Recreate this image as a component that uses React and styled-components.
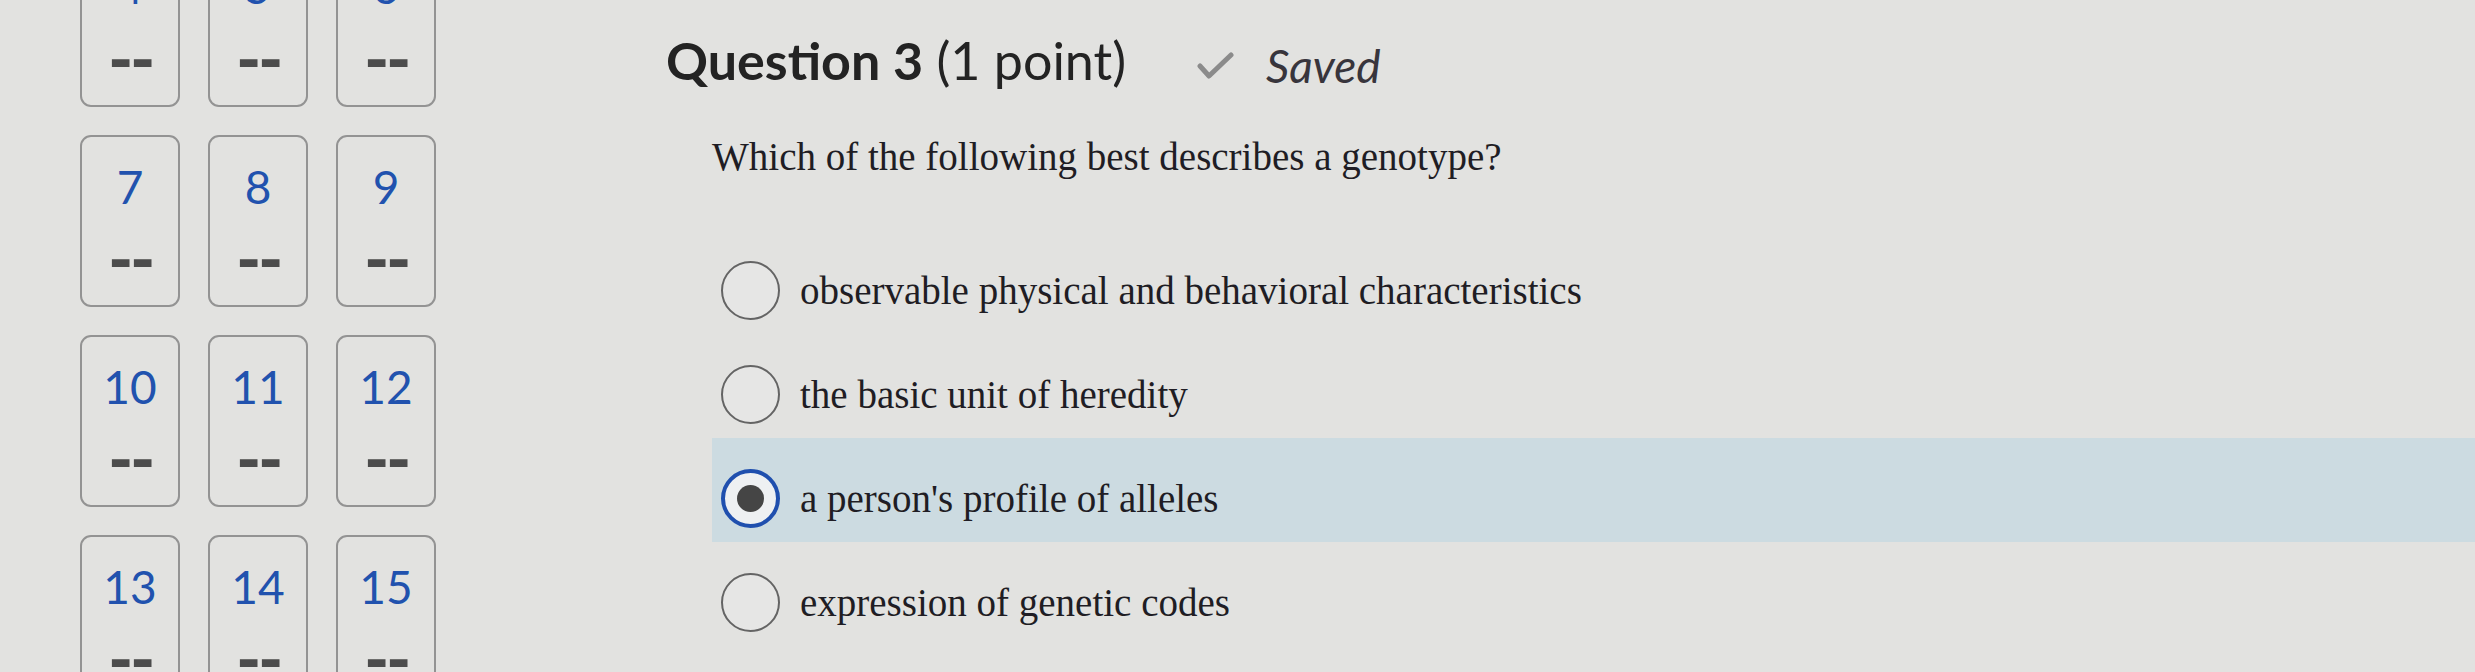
import React from "react";
import styled, { createGlobalStyle } from "styled-components";

const Global = createGlobalStyle`
  html, body {
    margin: 0;
    padding: 0;
    height: 672px;
    overflow: hidden;
    background: #e2e2e0;
  }
  body {
    font-family: Lato, "Open Sans", Arial, sans-serif;
  }
`;

const Page = styled.div`
  display: flex;
  align-items: flex-start;
  width: 2475px;
  height: 672px;
  overflow: hidden;
`;

const Nav = styled.nav`
  width: 586px;
  flex: none;
  padding-left: 80px;
`;

const TileGrid = styled.div`
  display: grid;
  grid-template-columns: repeat(3, 100px);
  grid-auto-rows: 172px;
  column-gap: 28px;
  row-gap: 28px;
  margin-top: -65px;
`;

const Tile = styled.div`
  box-sizing: border-box;
  border: 2px solid #939393;
  border-radius: 11px;
  display: flex;
  flex-direction: column;
  align-items: center;
`;

const TileNumber = styled.span`
  margin-top: 25px;
  font-family: Lato, sans-serif;
  font-size: 46px;
  line-height: 50px;
  color: #2152ae;
`;

const TileDash = styled.span`
  margin-top: 18px;
  font-family: Lato, sans-serif;
  font-weight: 900;
  font-size: 46px;
  line-height: 56px;
  color: #4c4c4c;
  letter-spacing: -2px;
  transform: scale(1.45, 1.5);
`;

const Main = styled.main`
  flex: 1;
  padding-top: 30px;
`;

const HeaderRow = styled.div`
  display: flex;
  align-items: flex-start;
`;

const Heading = styled.h1`
  margin: 0;
  font-family: Lato, sans-serif;
  font-size: 52px;
  line-height: 60px;
  font-weight: 400;
  color: #232323;
  white-space: nowrap;
`;

const Strong = styled.span`
  font-weight: 700;
`;

const SavedCheck = styled.svg`
  margin-left: 71px;
  margin-top: 22px;
  flex: none;
`;

const SavedText = styled.span`
  margin-left: 32px;
  margin-top: 8px;
  font-family: Lato, sans-serif;
  font-style: italic;
  font-size: 46px;
  line-height: 56px;
  color: #38353c;
`;

const Prompt = styled.p`
  margin: 40px 0 0 46px;
  font-family: "Liberation Serif", "Times New Roman", serif;
  font-size: 39px;
  line-height: 45px;
  color: #1f1d24;
  white-space: nowrap;
`;

const Options = styled.div`
  margin: 51px 0 0 46px;
  display: flex;
  flex-direction: column;
`;

const Option = styled.label`
  box-sizing: border-box;
  height: 104px;
  padding: 17px 0 0 9px;
  display: flex;
  align-items: center;
  background: ${(p) => (p.$selected ? "#ccdbe1" : "transparent")};
`;

const Radio = styled.span`
  box-sizing: border-box;
  flex: none;
  width: 59px;
  height: 59px;
  border-radius: 50%;
  border: ${(p) => (p.$checked ? "4px solid #1f4fae" : "2px solid #646464")};
  background: ${(p) => (p.$checked ? "#eef0f2" : "#e6e6e5")};
  display: flex;
  align-items: center;
  justify-content: center;
`;

const Dot = styled.span`
  width: 27px;
  height: 27px;
  border-radius: 50%;
  background: #454545;
`;

const OptionText = styled.span`
  margin-left: 20px;
  font-family: "Liberation Serif", "Times New Roman", serif;
  font-size: 39px;
  line-height: 45px;
  color: #1f1d24;
  white-space: nowrap;
`;

const tiles = [4, 5, 6, 7, 8, 9, 10, 11, 12, 13, 14, 15];

const options = [
  "observable physical and behavioral characteristics",
  "the basic unit of heredity",
  "a person's profile of alleles",
  "expression of genetic codes",
];

export default function App() {
  return (
    <>
      <Global />
      <Page>
        <Nav>
          <TileGrid>
            {tiles.map((n) => (
              <Tile key={n}>
                <TileNumber>{n}</TileNumber>
                <TileDash>--</TileDash>
              </Tile>
            ))}
          </TileGrid>
        </Nav>
        <Main>
          <HeaderRow>
            <Heading>
              <Strong>Question 3</Strong> (1 point)
            </Heading>
            <SavedCheck width="37" height="27" viewBox="0 0 37 27">
              <polyline
                points="3,14 12,24 34,3"
                fill="none"
                stroke="#8b8b8b"
                strokeWidth="5"
                strokeLinecap="round"
                strokeLinejoin="round"
              />
            </SavedCheck>
            <SavedText>Saved</SavedText>
          </HeaderRow>
          <Prompt>Which of the following best describes a genotype?</Prompt>
          <Options>
            {options.map((o, i) => (
              <Option key={o} $selected={i === 2}>
                <Radio $checked={i === 2}>{i === 2 && <Dot />}</Radio>
                <OptionText>{o}</OptionText>
              </Option>
            ))}
          </Options>
        </Main>
      </Page>
    </>
  );
}
